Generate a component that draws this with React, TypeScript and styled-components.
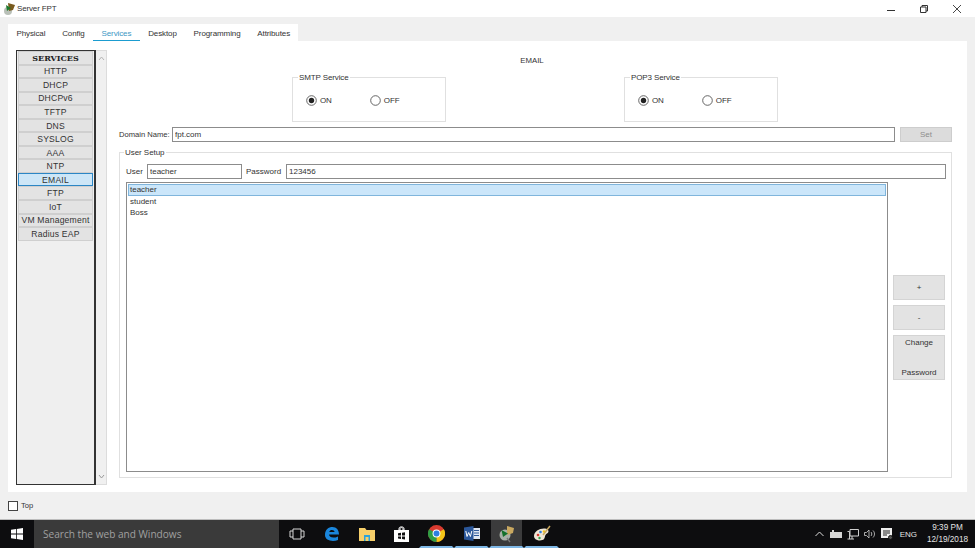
import React from "react";
import styled, { createGlobalStyle } from "styled-components";

const services = ["HTTP", "DHCP", "DHCPv6", "TFTP", "DNS", "SYSLOG", "AAA", "NTP", "EMAIL", "FTP", "IoT", "VM Management", "Radius EAP"];
const tabs = ["Physical", "Config", "Services", "Desktop", "Programming", "Attributes"];
const users = ["teacher", "student", "Boss"];

const GlobalStyle = createGlobalStyle`
  html, body {
    margin: 0;
    padding: 0;
    width: 975px;
    height: 548px;
    overflow: hidden;
    background: #f0f0f0;
    font-family: "Liberation Sans", Arial, sans-serif;
    color: #2b2b2b;
  }
`;

const Radio: React.FC<{ checked?: boolean; label: string }> = ({ checked, label }) => (
  <RadioRow>
    <svg width="11" height="11" viewBox="0 0 11 11">
      <circle cx="5.5" cy="5.5" r="4.8" fill="#fff" stroke="#555" strokeWidth="0.9" />
      {checked && <circle cx="5.5" cy="5.5" r="2.7" fill="#222" />}
    </svg>
    {label}
  </RadioRow>
);

const ServiceBox: React.FC<{ title: string }> = ({ title }) => (
  <ServiceFieldset>
    <ServiceLegend>{title}</ServiceLegend>
    <Radio checked label="ON" />
    <Radio label="OFF" />
  </ServiceFieldset>
);

const App: React.FC = () => {
  return (
    <Page>
      <GlobalStyle />
      <TitleBar>
        <TitleLeft>
          <svg width="13" height="14" viewBox="0 0 13 14">
            <circle cx="5" cy="9" r="4" fill="#b9c0b8" />
            <path d="M5 1 L12 3 L10 8 L6 9 Z" fill="#7a5a1e" />
            <path d="M3 3 L8 6 L4 9 Z" fill="#1d7a2c" />
          </svg>
          Server FPT
        </TitleLeft>
        <WindowButtons>
          <svg width="10" height="10" viewBox="0 0 10 10">
            <path d="M1 6.5 H9" stroke="#333" strokeWidth="1" />
          </svg>
          <svg width="10" height="10" viewBox="0 0 10 10">
            <path d="M1.5 3 H7 V8.5 H1.5 Z M3 3 V1.5 H8.5 V7 H7" fill="none" stroke="#333" strokeWidth="1" />
          </svg>
          <svg width="10" height="10" viewBox="0 0 10 10">
            <path d="M1 1 L9 9 M9 1 L1 9" stroke="#333" strokeWidth="0.9" />
          </svg>
        </WindowButtons>
      </TitleBar>

      <Body>
        <TabStrip>
          {tabs.map((t) => (
            <Tab key={t} $active={t === "Services"}>
              {t}
            </Tab>
          ))}
        </TabStrip>

        <Panel>
          <SideColumn>
            <SideList>
              <SideHeader>SERVICES</SideHeader>
              {services.map((s) => (
                <SideItem key={s} $active={s === "EMAIL"}>
                  {s}
                </SideItem>
              ))}
            </SideList>
            <ScrollBar>
              <svg width="7" height="5" viewBox="0 0 7 5">
                <path d="M1 4 L3.5 1 L6 4" fill="none" stroke="#b5b5b5" />
              </svg>
              <svg width="7" height="5" viewBox="0 0 7 5">
                <path d="M1 1 L3.5 4 L6 1" fill="none" stroke="#9a9a9a" />
              </svg>
            </ScrollBar>
          </SideColumn>

          <Main>
            <Heading>EMAIL</Heading>
            <ServicesRow>
              <ServiceBox title="SMTP Service" />
              <ServiceBox title="POP3 Service" />
            </ServicesRow>
            <DomainRow>
              <DomainLabel>Domain Name:</DomainLabel>
              <Input value="fpt.com" readOnly $grow />
              <SetButton>Set</SetButton>
            </DomainRow>
            <UserFieldset>
              <UserLegend>User Setup</UserLegend>
              <UserRow>
                <UserLabel>User</UserLabel>
                <Input value="teacher" readOnly $width={95} />
                <PasswordLabel>Password</PasswordLabel>
                <Input value="123456" readOnly $grow />
              </UserRow>
              <UserBody>
                <UserList>
                  {users.map((u) => (
                    <UserItem key={u} $active={u === "teacher"}>
                      {u}
                    </UserItem>
                  ))}
                </UserList>
                <ActionColumn>
                  <ActionButton>+</ActionButton>
                  <ActionButton>-</ActionButton>
                  <ChangeButton>
                    <span>Change</span>
                    <span>Password</span>
                  </ChangeButton>
                </ActionColumn>
              </UserBody>
            </UserFieldset>
          </Main>
        </Panel>

        <BottomRow>
          <CheckBox />
          Top
        </BottomRow>
      </Body>

      <TaskBar>
        <StartButton>
          <svg width="12" height="12" viewBox="0 0 12 12">
            <path d="M0 1.7 L5 1 V5.6 H0 Z M5.8 0.9 L12 0 V5.6 H5.8 Z M0 6.4 H5 V11 L0 10.3 Z M5.8 6.4 H12 V12 L5.8 11.1 Z" fill="#fff" />
          </svg>
        </StartButton>
        <SearchBox>Search the web and Windows</SearchBox>
        <TaskIcons>
          <TaskIcon>
            <svg width="16" height="12" viewBox="0 0 16 12">
              <path d="M4 1 H12 V11 H4 Z M4 3 H1 V9 H4 M12 3 H15 V9 H12" fill="none" stroke="#d8d8d8" />
            </svg>
          </TaskIcon>
          <TaskIcon>
            <svg width="16" height="16" viewBox="0 0 16 16">
              <path d="M1 9 C1 3.5 4.5 1 8.5 1 C12.5 1 15 4 15 8.6 H5 C5.2 11.5 9.5 12.6 14 10.4 V14 C8.5 16.2 1 14.6 1 9 Z M5.2 6 H10.6 C10.4 3.4 5.8 3.2 5.2 6 Z" fill="#1a86dc" fillRule="evenodd" />
            </svg>
          </TaskIcon>
          <TaskIcon>
            <svg width="16" height="14" viewBox="0 0 16 14">
              <path d="M0 1 H6 L7.5 3 H16 V14 H0 Z" fill="#f6cf6a" />
              <path d="M5 8 H11 V14 H9.5 V10 H6.5 V14 H5 Z" fill="#2aa3dc" />
            </svg>
          </TaskIcon>
          <TaskIcon>
            <svg width="15" height="16" viewBox="0 0 15 16">
              <path d="M5 4 V2.5 C5 0.3 10 0.3 10 2.5 V4 M6 4 V2.5 C6 1.3 9 1.3 9 2.5 V4" fill="none" stroke="#fff" />
              <path d="M0 4 H15 V16 H0 Z" fill="#fff" />
              <path d="M4 7.3 L7 6.8 V9.5 H4 Z M8 6.7 L11 6.2 V9.5 H8 Z M4 10.5 H7 V13 L4 12.6 Z M8 10.5 H11 V13.6 L8 13.1 Z" fill="#111" />
            </svg>
          </TaskIcon>
          <TaskIcon $open>
            <svg width="17" height="17" viewBox="0 0 32 32">
              <circle cx="16" cy="16" r="16" fill="#d93a30" />
              <path d="M16 16 L29.9 8 A16 16 0 0 1 16 32 Z" fill="#f5c518" />
              <path d="M16 16 L16 32 A16 16 0 0 1 2.1 8 Z" fill="#2f9e44" />
              <circle cx="16" cy="16" r="7.4" fill="#fff" />
              <circle cx="16" cy="16" r="5.6" fill="#2f7fe0" />
            </svg>
          </TaskIcon>
          <TaskIcon $open>
            <svg width="16" height="15" viewBox="0 0 16 15">
              <path d="M7 2 H16 V13 H7 Z" fill="#dfe7f3" />
              <path d="M10 4.5 H15 M10 7 H15 M10 9.5 H15" stroke="#2b579a" />
              <path d="M0 1.5 L9.5 0 V15 L0 13.5 Z" fill="#2b579a" />
              <path d="M1.8 5 L3 10.5 L4.7 6.5 L6.4 10.5 L7.8 5" fill="none" stroke="#fff" strokeWidth="1" />
            </svg>
          </TaskIcon>
          <TaskIcon $open $active>
            <svg width="18" height="18" viewBox="0 0 18 18">
              <circle cx="7" cy="10" r="5.5" fill="#a8b0a8" />
              <path d="M9 1 L16 3 L15 8 L9 10 Z" fill="#c9a860" />
              <path d="M3.5 5 L10 8.5 L5 12 Z" fill="#13702a" />
              <path d="M9 13 L12 17" stroke="#777" strokeWidth="1.4" />
            </svg>
          </TaskIcon>
          <TaskIcon $open>
            <svg width="18" height="18" viewBox="0 0 18 18">
              <path d="M1 11 C1 6 7 3 12 3.5 C16 4 16.5 7 14 8.5 C11.5 10 12.5 12 11 14 C9 16.5 1 16 1 11 Z" fill="#eee6d6" />
              <circle cx="5" cy="10" r="1.3" fill="#d93a30" />
              <circle cx="7.5" cy="7" r="1.3" fill="#2f7fe0" />
              <circle cx="11" cy="6.5" r="1.2" fill="#f5c518" />
              <circle cx="6.5" cy="13" r="1.2" fill="#2f9e44" />
              <path d="M17 1 L10 10" stroke="#c9a860" strokeWidth="1.5" />
            </svg>
          </TaskIcon>
        </TaskIcons>
        <Tray>
          <TrayIcon>
            <svg width="9" height="6" viewBox="0 0 9 6">
              <path d="M0.5 5 L4.5 1 L8.5 5" fill="none" stroke="#ddd" />
            </svg>
          </TrayIcon>
          <TrayIcon>
            <svg width="12" height="8" viewBox="0 0 12 8">
              <path d="M0 2 H2 V0 H4 V2 H12 V8 H0 Z" fill="#d5d5d5" />
            </svg>
          </TrayIcon>
          <TrayIcon>
            <svg width="12" height="11" viewBox="0 0 12 11">
              <path d="M3 0.5 H11.5 V7 H3 Z M0.5 2.5 H2.5 V10 M0.5 10 H7 M5 7 V10" fill="none" stroke="#cfcfcf" />
            </svg>
          </TrayIcon>
          <TrayIcon>
            <svg width="12" height="10" viewBox="0 0 12 10">
              <path d="M0.5 3.5 H2.5 L5 1 V9 L2.5 6.5 H0.5 Z M7 3 C8 4 8 6 7 7 M9 1.5 C11 3.5 11 6.5 9 8.5" fill="none" stroke="#bdbdbd" strokeWidth="0.9" />
            </svg>
          </TrayIcon>
          <TrayIcon>
            <svg width="12" height="12" viewBox="0 0 12 12">
              <path d="M0 0 H11 V10 H0 Z" fill="#eee" />
              <path d="M2 3 H9 M2 5 H9 M2 7 H6" stroke="#222" />
              <circle cx="9.5" cy="9.5" r="2" fill="#555" stroke="#111" />
            </svg>
          </TrayIcon>
          <TrayLang>ENG</TrayLang>
          <Clock>
            <span>9:39 PM</span>
            <span>12/19/2018</span>
          </Clock>
        </Tray>
      </TaskBar>
    </Page>
  );
};

export default App;

const Page = styled.div`
  width: 975px;
  height: 548px;
  display: flex;
  flex-direction: column;
  overflow: hidden;
`;

const TitleBar = styled.div`
  height: 17px;
  flex: none;
  background: #fff;
  display: flex;
  justify-content: space-between;
  align-items: center;
`;

const TitleLeft = styled.div`
  display: flex;
  align-items: center;
  gap: 1px;
  padding-left: 3px;
  font-size: 8px;
  letter-spacing: -0.15px;
  color: #333;
`;

const WindowButtons = styled.div`
  display: flex;
  align-items: center;
  gap: 23px;
  padding-right: 13px;
`;

const Body = styled.div`
  flex: 1;
  min-height: 0;
  background: #f0f0f0;
  display: flex;
  flex-direction: column;
  padding: 7px 8px 0;
`;

const TabStrip = styled.div`
  height: 17px;
  flex: none;
  width: 290px;
  background: #fff;
  display: flex;
  align-items: stretch;
  box-sizing: border-box;
`;

const Tab = styled.div<{ $active?: boolean }>`
  display: flex;
  align-items: center;
  padding: 1px 8.4px 0;
  font-size: 8px;
  letter-spacing: -0.1px;
  color: ${(p) => (p.$active ? "#3d97c4" : "#333")};
  border-bottom: 3px solid ${(p) => (p.$active ? "#1b9cd0" : "transparent")};
  height: 14px;
  margin-top: 1px;
  white-space: nowrap;
`;

const Panel = styled.div`
  height: 451px;
  flex: none;
  background: #fff;
  display: flex;
  padding: 9px 15px 7px 8px;
  box-sizing: border-box;
  gap: 12px;
`;

const SideColumn = styled.div`
  display: flex;
  width: 91px;
  flex: none;
`;

const SideList = styled.div`
  width: 80px;
  flex: none;
  box-sizing: border-box;
  border: 1px solid #333;
  border-right-width: 2px;
  background: #efefef;
  padding: 0 1px;
  display: flex;
  flex-direction: column;
`;

const SideHeader = styled.div`
  height: 13.55px;
  flex: none;
  box-sizing: border-box;
  background: #e3e3e3;
  border: 1px solid #cfcfcf;
  display: flex;
  align-items: center;
  justify-content: center;
  font-family: "DejaVu Serif", serif;
  font-weight: 700;
  font-size: 8px;
  color: #222;
`;

const SideItem = styled.div<{ $active?: boolean }>`
  height: 13.55px;
  flex: none;
  box-sizing: border-box;
  background: ${(p) => (p.$active ? "#cde6f7" : "#e3e3e3")};
  border: 1px solid ${(p) => (p.$active ? "#2b86c5" : "#cfcfcf")};
  display: flex;
  align-items: center;
  justify-content: center;
  font-size: 8.6px;
  letter-spacing: 0.2px;
  color: #333;
  white-space: nowrap;
`;

const ScrollBar = styled.div`
  width: 11px;
  flex: none;
  box-sizing: border-box;
  background: #f0f0f0;
  border: 1px solid #dcdcdc;
  border-left: none;
  display: flex;
  flex-direction: column;
  justify-content: space-between;
  align-items: center;
  padding: 5px 0;
`;

const Main = styled.div`
  flex: 1;
  min-width: 0;
  display: flex;
  flex-direction: column;
`;

const Heading = styled.div`
  height: 23px;
  flex: none;
  text-align: center;
  font-size: 7.8px;
  line-height: 22px;
  padding-right: 7px;
  color: #333;
`;

const ServicesRow = styled.div`
  display: flex;
  flex: none;
  height: 49px;
  padding-left: 173px;
  gap: 178px;
`;

const ServiceFieldset = styled.fieldset`
  width: 154px;
  height: 49px;
  margin: 0;
  padding: 0 0 0 13px;
  box-sizing: border-box;
  border: 1px solid #e0e0e0;
  display: flex;
  align-items: flex-start;
  gap: 38px;
  min-width: 0;
`;

const ServiceLegend = styled.legend`
  padding: 0 1px;
  margin-left: -8px;
  font-size: 8px;
  letter-spacing: -0.12px;
  color: #333;
  line-height: 9px;
`;

const RadioRow = styled.label`
  display: flex;
  align-items: center;
  gap: 3px;
  font-size: 8px;
  letter-spacing: -0.1px;
  color: #333;
  margin-top: 13px;
`;

const DomainRow = styled.div`
  display: flex;
  align-items: center;
  height: 15px;
  flex: none;
  margin-top: 5px;
`;

const DomainLabel = styled.span`
  width: 53px;
  flex: none;
  font-size: 7.6px;
  color: #333;
  white-space: nowrap;
`;

const Input = styled.input<{ $grow?: boolean; $width?: number }>`
  height: 15px;
  box-sizing: border-box;
  border: 1px solid #8c8c8c;
  background: #fff;
  padding: 0 2px;
  margin: 0;
  font-family: inherit;
  font-size: 8px;
  color: #333;
  outline: none;
  min-width: 0;
  ${(p) => (p.$grow ? "flex: 1;" : "")}
  ${(p) => (p.$width ? `width: ${p.$width}px; flex: none;` : "")}
`;

const SetButton = styled.div`
  width: 52px;
  height: 15px;
  flex: none;
  margin-left: 5px;
  background: #dcdcdc;
  border: 1px solid #cdcdcd;
  box-sizing: border-box;
  display: flex;
  align-items: center;
  justify-content: center;
  font-size: 8px;
  color: #8d8d8d;
`;

const UserFieldset = styled.fieldset`
  flex: none;
  height: 330px;
  margin: 6px 0 0;
  padding: 0 5px 0 6px;
  box-sizing: border-box;
  border: 1px solid #e0e0e0;
  min-width: 0;
`;

const UserLegend = styled.legend`
  padding: 0 1px;
  margin-left: -2px;
  font-size: 8px;
  letter-spacing: -0.05px;
  color: #333;
  line-height: 9px;
`;

const UserRow = styled.div`
  display: flex;
  align-items: center;
  height: 14px;
  margin-top: 7px;
  font-size: 8px;
  color: #333;
`;

const UserLabel = styled.span`
  width: 21px;
  flex: none;
`;

const PasswordLabel = styled.span`
  width: 44px;
  flex: none;
  padding-left: 4px;
  box-sizing: border-box;
  white-space: nowrap;
`;

const UserBody = styled.div`
  display: flex;
  margin-top: 4px;
  height: 290px;
`;

const UserList = styled.div`
  width: 762px;
  flex: none;
  box-sizing: border-box;
  border: 1px solid #8c8c8c;
  background: #fff;
  padding: 1px;
`;

const UserItem = styled.div<{ $active?: boolean }>`
  height: 11.6px;
  box-sizing: border-box;
  display: flex;
  align-items: center;
  padding-left: 2px;
  font-size: 8px;
  color: #333;
  background: ${(p) => (p.$active ? "#cbe6fa" : "transparent")};
  outline: ${(p) => (p.$active ? "1px solid #7fb5dc" : "none")};
  outline-offset: -1px;
`;

const ActionColumn = styled.div`
  display: flex;
  flex-direction: column;
  gap: 5px;
  padding: 93px 0 0 5px;
`;

const ActionButton = styled.div`
  width: 52px;
  height: 25px;
  box-sizing: border-box;
  background: #e3e3e3;
  border: 1px solid #d4d4d4;
  display: flex;
  align-items: center;
  justify-content: center;
  font-size: 8px;
  color: #333;
`;

const ChangeButton = styled(ActionButton)`
  height: 45px;
  flex-direction: column;
  justify-content: space-between;
  padding: 2px 0;
`;

const BottomRow = styled.div`
  flex: 1;
  display: flex;
  align-items: center;
  gap: 3px;
  font-size: 7.6px;
  color: #333;
`;

const CheckBox = styled.div`
  width: 10px;
  height: 10px;
  box-sizing: border-box;
  border: 1px solid #444;
  background: #fff;
`;

const TaskBar = styled.div`
  height: 28px;
  flex: none;
  background: #0d0d0f;
  border-top: 1px solid #bdbdbd;
  display: flex;
  align-items: stretch;
`;

const StartButton = styled.div`
  width: 34px;
  flex: none;
  display: flex;
  align-items: center;
  justify-content: center;
`;

const SearchBox = styled.div`
  width: 245px;
  flex: none;
  background: #3a3a3a;
  display: flex;
  align-items: center;
  padding-left: 9px;
  box-sizing: border-box;
  font-family: "Open Sans", sans-serif;
  font-size: 10.1px;
  color: #a0a0a0;
  white-space: nowrap;
`;

const TaskIcons = styled.div`
  display: flex;
  align-items: stretch;
`;

const TaskIcon = styled.div<{ $active?: boolean; $open?: boolean }>`
  width: 35px;
  box-sizing: border-box;
  display: flex;
  align-items: center;
  justify-content: center;
  background: ${(p) => (p.$active ? "#3b3b3c" : "transparent")};
  border-bottom: 2px solid ${(p) => (p.$open ? "#7fb8e6" : "transparent")};
  border-left: 2px solid #0d0d0f;
  border-right: 2px solid #0d0d0f;
  padding-top: 1px;
`;

const Tray = styled.div`
  margin-left: auto;
  display: flex;
  align-items: center;
  padding-right: 7px;
  color: #e4e4e4;
`;

const TrayIcon = styled.div`
  width: 17px;
  display: flex;
  align-items: center;
  justify-content: center;
`;

const TrayLang = styled.span`
  font-size: 8px;
  margin-left: 4px;
`;

const Clock = styled.div`
  display: flex;
  flex-direction: column;
  align-items: center;
  font-size: 8.2px;
  line-height: 12px;
  margin-left: 10px;
`;
